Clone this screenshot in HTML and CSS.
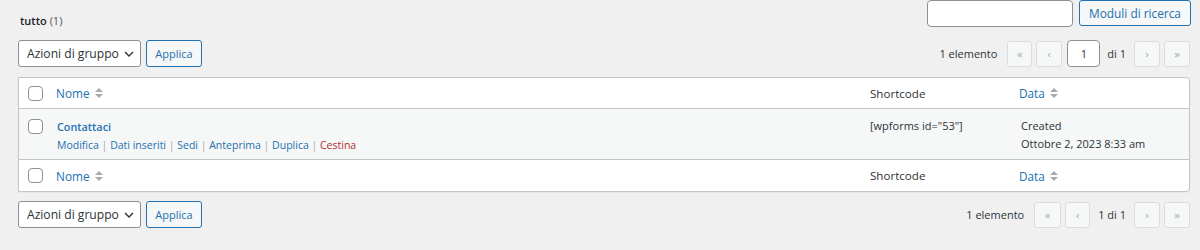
FILE: index.html
```html
<!DOCTYPE html>
<html lang="it">
<head>
<meta charset="utf-8">
<title>Moduli</title>
<link rel="stylesheet" href="styles.css">
</head>
<body>
<div class="wrap">
  <div class="toprow">
    <div class="subsubsub"><strong>tutto</strong> <span class="count">(1)</span></div>
    <div class="search-box">
      <input class="search-input" type="search" value="">
      <button class="button search-btn">Moduli di ricerca</button>
    </div>
  </div>

  <div class="tablenav top">
    <div class="bulk">
      <div class="select">Azioni di gruppo <svg class="chev" viewBox="0 0 10 6" width="10" height="6"><path d="M1 1l4 4 4-4" fill="none" stroke="#2c3338" stroke-width="1.4"/></svg></div>
      <button class="button small">Applica</button>
    </div>
    <div class="pages">
      <span class="num">1 elemento</span>
      <span class="pbtn first">«</span>
      <span class="pbtn prev">‹</span>
      <span class="curbox">1</span>
      <span class="of">di 1</span>
      <span class="pbtn next">›</span>
      <span class="pbtn last">»</span>
    </div>
  </div>

  <div class="table">
    <div class="row head">
      <div class="cell cb"><span class="check"></span></div>
      <div class="cell name"><a class="sort">Nome <span class="sorti"><i class="up"></i><i class="down"></i></span></a></div>
      <div class="cell sc">Shortcode</div>
      <div class="cell date"><a class="sort">Data <span class="sorti"><i class="up"></i><i class="down"></i></span></a></div>
    </div>
    <div class="row body">
      <div class="cell cb"><span class="check"></span></div>
      <div class="cell name">
        <a class="title">Contattaci</a>
        <div class="actions"><a>Modifica</a> | <a>Dati inseriti</a> | <a>Sedi</a> | <a>Anteprima</a> | <a>Duplica</a> | <a class="trash">Cestina</a></div>
      </div>
      <div class="cell sc small-text">[wpforms id="53"]</div>
      <div class="cell date small-text">Created<br>Ottobre 2, 2023 8:33 am</div>
    </div>
    <div class="row foot">
      <div class="cell cb"><span class="check"></span></div>
      <div class="cell name"><a class="sort">Nome <span class="sorti"><i class="up"></i><i class="down"></i></span></a></div>
      <div class="cell sc">Shortcode</div>
      <div class="cell date"><a class="sort">Data <span class="sorti"><i class="up"></i><i class="down"></i></span></a></div>
    </div>
  </div>

  <div class="tablenav bottom">
    <div class="bulk">
      <div class="select">Azioni di gruppo <svg class="chev" viewBox="0 0 10 6" width="10" height="6"><path d="M1 1l4 4 4-4" fill="none" stroke="#2c3338" stroke-width="1.4"/></svg></div>
      <button class="button small">Applica</button>
    </div>
    <div class="pages">
      <span class="num">1 elemento</span>
      <span class="pbtn first b">«</span>
      <span class="pbtn prev b">‹</span>
      <span class="of wide">1 di 1</span>
      <span class="pbtn next">›</span>
      <span class="pbtn last">»</span>
    </div>
  </div>
</div>
</body>
</html>
```

FILE: styles.css
```css
* { box-sizing: border-box; }
html, body { margin: 0; padding: 0; }
body {
  background: #f0f0f1;
  font-family: "Open Sans", "Noto Sans", sans-serif;
  font-size: 12px;
  color: #3c434a;
  width: 1200px;
  height: 250px;
  overflow: hidden;
}
.wrap { padding: 0 10px 0 18px; }

.toprow {
  display: flex;
  justify-content: space-between;
  align-items: flex-start;
  height: 40px;
}
.subsubsub {
  margin-top: 13px;
  margin-left: 2px;
  font-size: 11px;
  color: #50575e;
}
.subsubsub strong { color: #1d2327; font-weight: 600; }
.search-box { display: flex; gap: 6px; margin-right: -1px; }
.search-input {
  width: 146px;
  height: 27px;
  border: 1px solid #8c8f94;
  border-radius: 4px;
  background: #fff;
  margin: 0;
  padding: 0 7px;
}
.button {
  font-family: inherit;
  color: #2271b1;
  border: 1px solid #2271b1;
  background: #f6f7f7;
  border-radius: 3px;
  cursor: pointer;
  padding: 0;
}
.search-btn { font-size: 11.85px; height: 26px; width: 112px; margin: 0; }
.button.small { font-size: 11px; height: 27px; width: 56px; margin: 0; }

.tablenav {
  display: flex;
  justify-content: space-between;
  align-items: center;
  height: 27px;
}
.tablenav.top { margin-bottom: 10px; }
.tablenav.bottom { margin-top: 9px; }
.bulk { display: flex; align-items: center; gap: 5px; }
.select {
  display: flex;
  align-items: center;
  justify-content: space-between;
  width: 123px;
  height: 27px;
  border: 1px solid #8c8f94;
  border-radius: 3px;
  background: #fff;
  padding: 0 6px 0 8px;
  font-size: 12.1px;
  color: #2c3338;
}
.chev { display: block; }

.pages { display: flex; align-items: center; font-size: 11px; color: #2c3338; }
.pages .num { margin-right: 10px; }
.pbtn {
  display: flex;
  align-items: center;
  justify-content: center;
  width: 26px;
  height: 26px;
  border: 1px solid #dcdcde;
  border-radius: 3px;
  background: #f6f7f7;
  color: #a7aaad;
  font-size: 11.5px;
}
.pbtn.first { width: 25px; margin-right: 4px; }
.pbtn.prev { margin-right: 5px; }
.pbtn.first.b { width: 27px; margin-right: 4px; }
.pbtn.prev.b { width: 25px; margin-right: 8px; }
.pbtn.next { margin-right: 4px; }
.pbtn.last { width: 26px; }
.curbox {
  display: flex;
  align-items: center;
  justify-content: center;
  width: 33px;
  height: 27px;
  border: 1px solid #8c8f94;
  border-radius: 4px;
  background: #fff;
  margin-right: 7px;
}
.of { margin-right: 8px; }
.of.wide { margin-right: 8px; }

.table {
  background: #fff;
  border: 1px solid #c3c4c7;
  box-shadow: 0 1px 1px rgba(0,0,0,.04);
  border-radius: 0 4px 4px 0;
}
.row { display: grid; grid-template-columns: 27px 814px 149px 180px; }
.row.head { height: 31px; border-bottom: 1px solid #c3c4c7; align-items: center; }
.row.body { height: 51px; background: #f6f7f7; border-bottom: 1px solid #c3c4c7; }
.row.foot { height: 31px; align-items: center; }
.cell { padding: 0 10px; font-size: 11.6px; color: #2c3338; }
.cell.cb { padding: 0 0 0 9px; display: flex; align-items: center; }
.row.body .cell.cb { align-items: flex-start; padding-top: 10px; }
.check {
  display: block;
  width: 15px;
  height: 15px;
  border: 1px solid #8c8f94;
  border-radius: 4px;
  background: #fff;
}
.sort { color: #2271b1; display: inline-flex; align-items: center; gap: 5px; font-size: 11.8px; }
.sorti { display: inline-flex; flex-direction: column; gap: 2px; }
.sorti i { display: block; width: 0; height: 0; border-left: 4px solid transparent; border-right: 4px solid transparent; }
.sorti .up { border-bottom: 4px solid #a7aaad; }
.sorti .down { border-top: 4px solid #a7aaad; }

.row.body .cell.name { padding-top: 9px; padding-left: 11px; }
.title { color: #2271b1; font-weight: 600; font-size: 10.8px; display: block; line-height: 18px; }
.actions { font-size: 10.5px; color: #a7aaad; line-height: 18px; }
.actions a { color: #2271b1; }
.actions a.trash { color: #b32d2e; }
.small-text { font-size: 11px; line-height: 18px; }
.row.body .cell.sc { padding-top: 8px; }
.row.body .cell.date { padding-top: 8px; padding-left: 12px; }
```
